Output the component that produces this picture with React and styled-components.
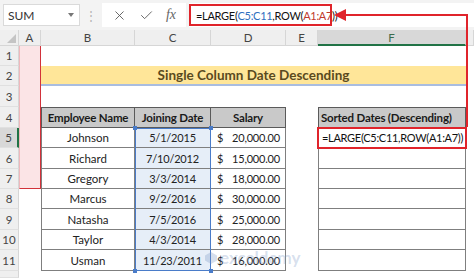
import React from 'react'
import styled, { createGlobalStyle } from 'styled-components'
import { X, Check } from 'lucide-react'

const redColor = '#e0242b'
const gridLine = '#7f7f7f'

const GlobalStyle = createGlobalStyle`
  html, body {
    margin: 0;
    padding: 0;
    background: #ffffff;
  }
  body {
    font-family: Lato, "Noto Sans", sans-serif;
    color: #222;
  }
`

const Page = styled.div`
  position: relative;
  width: 474px;
  height: 278px;
  overflow: hidden;
  background: #ffffff;
`

const FormulaBar = styled.div`
  display: flex;
  align-items: center;
  height: 30px;
  padding: 0 0 0 3px;
  box-sizing: border-box;
  background: #f3f3f3;
`

const NameBox = styled.div`
  display: flex;
  justify-content: space-between;
  align-items: center;
  width: 77px;
  height: 22px;
  padding: 0 5px 0 4px;
  box-sizing: border-box;
  background: #ffffff;
  border: 1px solid #dadada;
  font-size: 12px;
  color: #333;
`

const Caret = styled.span`
  width: 0;
  height: 0;
  border-left: 3px solid transparent;
  border-right: 3px solid transparent;
  border-top: 4px solid #777;
`

const Dots = styled.div`
  width: 22px;
  text-align: center;
  font-size: 12px;
  color: #b5b5b5;
`

const FxBox = styled.div`
  display: flex;
  align-items: center;
  justify-content: space-around;
  width: 84px;
  height: 24px;
  padding: 0 4px;
  box-sizing: border-box;
  background: #ffffff;
  color: #555;
`

const FxText = styled.span`
  font-family: "Liberation Serif", serif;
  font-style: italic;
  font-size: 14px;
  color: #666;
`

const FormulaInput = styled.div`
  flex: 1;
  display: flex;
  align-items: center;
  height: 24px;
  margin-left: 3px;
  background: #ffffff;
`

const RedFrame = styled.div`
  display: flex;
  align-items: center;
  width: 143px;
  height: 22px;
  padding: 0 0 0 5px;
  box-sizing: border-box;
  border: 2px solid ${redColor};
  font-size: 11px;
  letter-spacing: -0.3px;
  color: #111;
  white-space: nowrap;
`

const Ref = styled.span`
  color: ${p => p.$color};
`

const Sheet = styled.div`
  display: grid;
  grid-template-columns: 19px 22px 94px 76px 75px 32px 148px 1fr;
  grid-template-rows: 16px 20px 20px 21px 21px 20px 21px 20px 20px 21px 20px 21px 1fr;
  height: 248px;
`

const Placed = styled.div`
  grid-row: ${p => p.$r};
  grid-column: ${p => p.$c};
  box-sizing: border-box;
  min-width: 0;
`

const Corner = styled(Placed)`
  position: relative;
  background: #efefef;
  border-right: 1px solid #d6d6d6;
  border-bottom: 1px solid #d6d6d6;
  &::after {
    content: '';
    position: absolute;
    right: 2px;
    bottom: 2px;
    border-left: 9px solid transparent;
    border-bottom: 9px solid #c4c4c4;
  }
`

const ColHead = styled(Placed)`
  display: flex;
  align-items: center;
  justify-content: center;
  font-size: 11.5px;
  color: ${p => (p.$active ? '#3a6b4c' : '#444')};
  background: ${p => (p.$active ? '#d8d8d8' : '#efefef')};
  border-right: 1px solid #d6d6d6;
  border-bottom: ${p => (p.$active ? '2px solid #217346' : '1px solid #d6d6d6')};
`

const RowHead = styled(Placed)`
  display: flex;
  align-items: center;
  justify-content: center;
  font-size: 11.5px;
  color: #444;
  background: ${p => (p.$active ? '#d8d8d8' : '#efefef')};
  border-right: ${p => (p.$active ? '2px solid #217346' : '1px solid #d6d6d6')};
  border-bottom: 1px solid #e0e0e0;
`

const TitleBand = styled(Placed)`
  display: flex;
  align-items: center;
  justify-content: center;
  background: #ffe699;
  border-bottom: 2px solid #a9bde0;
  font-size: 13.5px;
  font-weight: 700;
  color: #5a4a1e;
`

const HeadCell = styled(Placed)`
  display: flex;
  align-items: center;
  justify-content: ${p => (p.$left ? 'flex-start' : 'center')};
  padding: 0 2px;
  background: #c9c9c9;
  font-size: 11.5px;
  letter-spacing: -0.2px;
  font-weight: 700;
  color: #1a1a1a;
  white-space: nowrap;
  border-top: 1px solid #5a5a5a;
  border-right: 1px solid #5a5a5a;
  border-bottom: 1px solid #5a5a5a;
  border-left: ${p => (p.$first ? '1px solid #5a5a5a' : 'none')};
`

const DataCell = styled(Placed)`
  display: flex;
  align-items: center;
  justify-content: center;
  font-size: ${p => (p.$numeric ? '11px' : '11.5px')};
  letter-spacing: ${p => (p.$numeric ? '-0.2px' : '0')};
  color: #222;
  background: ${p => (p.$selected ? '#e6eef8' : '#ffffff')};
  border-right: 1px solid ${gridLine};
  border-bottom: 1px solid ${gridLine};
  border-left: ${p => (p.$first ? `1px solid ${gridLine}` : 'none')};
`

const MoneyCell = styled(DataCell)`
  justify-content: space-between;
  padding: 0 5px 0 6px;
`

const FormulaCell = styled(DataCell)`
  justify-content: flex-start;
  padding-left: 3px;
  font-size: 11px;
  letter-spacing: -0.3px;
  color: #111;
  white-space: nowrap;
  z-index: 2;
  outline: 2px solid ${redColor};
  outline-offset: -1px;
`

const ColumnMark = styled(Placed)`
  background: #fbe4e6;
  border-left: 1px solid #f0b8bc;
  border-right: 1.5px solid #d2323a;
  border-bottom: 1.5px solid #d2323a;
  z-index: 1;
`

const SelectionFrame = styled(Placed)`
  position: relative;
  border: 1.5px solid #4a7cc9;
  z-index: 1;
  pointer-events: none;
`

const Handle = styled.span`
  position: absolute;
  width: 4px;
  height: 4px;
  background: #4a7cc9;
  ${p => (p.$top ? 'top: -3px;' : 'bottom: -3px;')}
  ${p => (p.$left ? 'left: -3px;' : 'right: -3px;')}
`

const Watermark = styled.div`
  position: absolute;
  left: 204px;
  top: 247px;
  display: flex;
  align-items: center;
  gap: 2px;
  font-size: 17px;
  font-weight: 700;
  color: rgba(120, 150, 195, 0.3);
  pointer-events: none;
  z-index: 3;
`

const Arrow = styled.svg`
  position: absolute;
  left: 0;
  top: 0;
  pointer-events: none;
  z-index: 5;
`

const rows = [
  { name: 'Johnson', date: '5/1/2015', salary: '20,000.00' },
  { name: 'Richard', date: '7/10/2012', salary: '15,000.00' },
  { name: 'Gregory', date: '3/3/2014', salary: '18,000.00' },
  { name: 'Marcus', date: '9/2/2016', salary: '30,000.00' },
  { name: 'Natasha', date: '7/5/2016', salary: '25,000.00' },
  { name: 'Taylor', date: '4/3/2014', salary: '28,000.00' },
  { name: 'Usman', date: '11/23/2011', salary: '16,000.00' },
]

const letters = ['A', 'B', 'C', 'D', 'E', 'F', '']

function App() {
  return (
    <Page>
      <GlobalStyle />

      <FormulaBar>
        <NameBox>
          SUM
          <Caret />
        </NameBox>
        <Dots>⋮</Dots>
        <FxBox>
          <X size={15} strokeWidth={1.4} />
          <Check size={15} strokeWidth={1.4} />
          <FxText>fx</FxText>
        </FxBox>
        <FormulaInput>
          <RedFrame>
            =LARGE(<Ref $color="#2f6fc0">C5:C11</Ref>,ROW(<Ref $color="#c0392b">A1:A7</Ref>))
          </RedFrame>
        </FormulaInput>
      </FormulaBar>

      <Sheet>
        <Corner $r={1} $c={1} />
        {letters.map((l, i) => (
          <ColHead key={i} $r={1} $c={i + 2} $active={l === 'F'}>{l}</ColHead>
        ))}
        {Array.from({ length: 12 }, (_, i) => (
          <RowHead key={i} $r={i + 2} $c={1} $active={i + 1 === 5}>
            {i < 11 ? i + 1 : ''}
          </RowHead>
        ))}

        <ColumnMark $r="2 / 9" $c={2} />

        <TitleBand $r={3} $c="3 / 8">Single Column Date Descending</TitleBand>

        <HeadCell $r={5} $c={3} $first>Employee Name</HeadCell>
        <HeadCell $r={5} $c={4}>Joining Date</HeadCell>
        <HeadCell $r={5} $c={5}>Salary</HeadCell>
        <HeadCell $r={5} $c={7} $first $left>Sorted Dates (Descending)</HeadCell>

        {rows.map((row, i) => (
          <React.Fragment key={row.name}>
            <DataCell $r={i + 6} $c={3} $first>{row.name}</DataCell>
            <DataCell $r={i + 6} $c={4} $selected $numeric>{row.date}</DataCell>
            <MoneyCell $r={i + 6} $c={5} $numeric>
              <span>$</span>
              <span>{row.salary}</span>
            </MoneyCell>
            {i === 0 ? (
              <FormulaCell $r={6} $c={7} $first>=LARGE(C5:C11,ROW(A1:A7))</FormulaCell>
            ) : (
              <DataCell $r={i + 6} $c={7} $first />
            )}
          </React.Fragment>
        ))}

        <SelectionFrame $r="6 / 13" $c={4}>
          <Handle $top $left />
          <Handle $top />
          <Handle $left />
          <Handle />
        </SelectionFrame>
      </Sheet>

      <Watermark>
        <svg width="14" height="14" viewBox="0 0 14 14">
          <path d="M7 1 L13 4.5 L13 9.5 L7 13 L1 9.5 L1 4.5 Z" fill="rgba(120,150,195,0.3)" />
        </svg>
        exceldemy
      </Watermark>

      <Arrow width="474" height="278" viewBox="0 0 474 278">
        <path d="M467 127 L467 15 L344 15" fill="none" stroke={redColor} strokeWidth="2" />
        <polygon points="334,15 346,9 346,21" fill={redColor} />
      </Arrow>
    </Page>
  )
}

export default App
